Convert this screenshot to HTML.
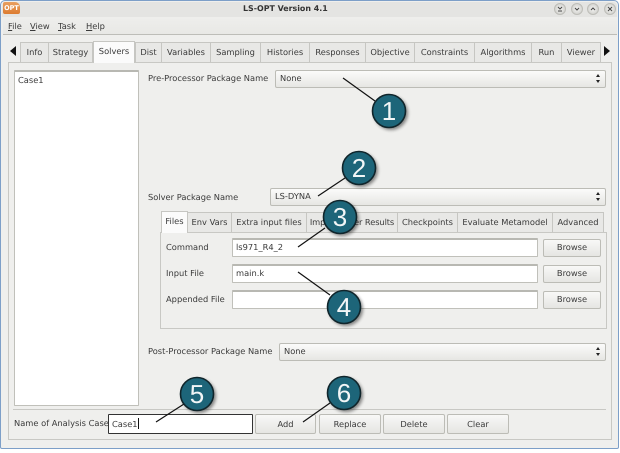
<!DOCTYPE html>
<html><head><meta charset="utf-8">
<style>
html,body{margin:0;padding:0;width:620px;height:453px;overflow:hidden;background:#fff}
*{box-sizing:border-box}
#r{position:absolute;left:0;top:0;width:620px;height:453px;font:8.3px/1 "DejaVu Sans",sans-serif;color:#3a3a3a;text-rendering:geometricPrecision;filter:blur(.3px)}
.a{position:absolute;white-space:nowrap}
.t{position:absolute;top:42px;height:20px;background:#e8e8e6;border:1px solid #c6c6c2;border-bottom:0;text-align:center;line-height:19px;white-space:nowrap;overflow:hidden}
.ta{background:#fbfbfb;top:41px;height:22px;line-height:19px}
.t2{top:212px}
.t2.ta{top:211px}
.c{position:absolute;height:18px;border:1px solid #bcbcb6;border-radius:2px;background:linear-gradient(#fbfbfa,#e6e6e3);line-height:15px;padding-left:4px}
.c i{position:absolute;right:5px;top:3px;width:0;height:0;border-left:2.5px solid transparent;border-right:2.5px solid transparent;border-bottom:3.5px solid #222}
.c b{position:absolute;right:5px;top:9px;width:0;height:0;border-left:2.5px solid transparent;border-right:2.5px solid transparent;border-top:3.5px solid #222}
.in{position:absolute;background:#fff;border:1px solid #c0c0ba;border-top:2px solid #b8b8b2;border-radius:1px;line-height:15px;padding-left:3px}
.b{position:absolute;border:1px solid #bcbcb6;border-radius:2px;background:linear-gradient(#f8f8f7,#e5e5e2);text-align:center;line-height:15px}
.w{position:absolute;top:3px;width:12px;height:12px;border-radius:50%;background:radial-gradient(#f4f4f2,#c8c8c4);border:1px solid #bdbdb8}
u{text-decoration:underline}
</style></head><body>
<div id="r">
<div class="a" style="left:0;top:0;width:619px;height:449px;background:#efefed;border:1.5px solid #7d9fc8;border-radius:5px 5px 2px 2px"></div>
<div class="a" style="left:2px;top:2px;width:615px;height:15px;background:#e4e4e2;border-radius:4px 4px 0 0"></div>
<div class="a" style="left:3px;top:17px;width:614px;height:18px;background:linear-gradient(#eeeeec,#e8e8e5);border-bottom:1px solid #bdbdb8"></div>
<div class="a" style="left:3px;top:2px;width:17px;height:12px;background:linear-gradient(#e8a060,#dc7c30);border-radius:2px 5px 2px 2px;color:#fff;font:bold 6.5px/12px 'DejaVu Sans',sans-serif;text-align:center">OPT</div>
<div class="a" style="left:243px;top:5px;font-weight:bold;font-size:7.9px;color:#333">LS-OPT Version 4.1</div>
<div class="w" style="left:554px"></div><div class="w" style="left:571px"></div><div class="w" style="left:587px"></div><div class="w" style="left:604px"></div>
<svg class="a" style="left:554px;top:3px" width="62" height="12" fill="none" stroke="#444" stroke-width="1"><path d="M4 4l2 2 2-2M4 8h4"/><path d="M21 5l2 2 2-2"/><path d="M37 7l2-2 2 2"/><path d="M54 4l4 4M58 4l-4 4"/></svg>
<div class="a" style="left:8px;top:22px"><u>F</u>ile</div>
<div class="a" style="left:30px;top:22px"><u>V</u>iew</div>
<div class="a" style="left:58px;top:22px"><u>T</u>ask</div>
<div class="a" style="left:86px;top:22px"><u>H</u>elp</div>

<div class="a" style="left:8px;top:62px;width:604px;height:378px;border:1px solid #c8c8c4;background:#efefed"></div>
<div class="a" style="left:10px;top:46px;width:0;height:0;border-top:5px solid transparent;border-bottom:5px solid transparent;border-right:6px solid #111"></div>
<div class="a" style="left:604px;top:46px;width:0;height:0;border-top:5px solid transparent;border-bottom:5px solid transparent;border-left:6px solid #111"></div>

<div class="t" style="left:20px;width:29px">Info</div>
<div class="t" style="left:48px;width:45px">Strategy</div>
<div class="t ta" style="left:93px;width:42px">Solvers</div>
<div class="t" style="left:135px;width:27px">Dist</div>
<div class="t" style="left:161px;width:50px">Variables</div>
<div class="t" style="left:210px;width:51px">Sampling</div>
<div class="t" style="left:260px;width:50px">Histories</div>
<div class="t" style="left:309px;width:57px">Responses</div>
<div class="t" style="left:365px;width:50px">Objective</div>
<div class="t" style="left:414px;width:61px">Constraints</div>
<div class="t" style="left:474px;width:58px">Algorithms</div>
<div class="t" style="left:531px;width:31px">Run</div>
<div class="t" style="left:561px;width:40px">Viewer</div>

<div class="in" style="left:14px;top:70px;width:125px;height:336px;padding-top:1px">Case1</div>

<div class="a" style="left:148px;top:74px">Pre-Processor Package Name</div>
<div class="c" style="left:275px;top:70px;width:331px">None<i></i><b></b></div>
<div class="a" style="left:148px;top:193px">Solver Package Name</div>
<div class="c" style="left:270px;top:188px;width:336px">LS-DYNA<i></i><b></b></div>

<div class="a" style="left:160px;top:232px;width:447px;height:97px;border:1px solid #c8c8c4"></div>
<div class="t t2 ta" style="left:161px;width:27px">Files</div>
<div class="t t2" style="left:187px;width:45px">Env Vars</div>
<div class="t t2" style="left:231px;width:76px">Extra input files</div>
<div class="t t2" style="left:306px;width:92px;letter-spacing:-.1px">Import Other Results</div>
<div class="t t2" style="left:397px;width:61px">Checkpoints</div>
<div class="t t2" style="left:457px;width:96px">Evaluate Metamodel</div>
<div class="t t2" style="left:552px;width:52px">Advanced</div>

<div class="a" style="left:166px;top:243px">Command</div>
<div class="a" style="left:166px;top:269px">Input File</div>
<div class="a" style="left:166px;top:295px">Appended File</div>
<div class="in" style="left:232px;top:238px;width:306px;height:19px">ls971_R4_2</div>
<div class="in" style="left:232px;top:264px;width:306px;height:19px">main.k</div>
<div class="in" style="left:232px;top:290px;width:306px;height:19px"></div>
<div class="b" style="left:543px;top:239px;width:58px;height:18px">Browse</div>
<div class="b" style="left:543px;top:265px;width:58px;height:18px">Browse</div>
<div class="b" style="left:543px;top:291px;width:58px;height:18px">Browse</div>

<div class="a" style="left:148px;top:347px">Post-Processor Package Name</div>
<div class="c" style="left:279px;top:343px;width:327px">None<i></i><b></b></div>

<div class="a" style="left:13px;top:409px;width:593px;height:1px;background:#c8c8c4"></div>
<div class="a" style="left:14px;top:419px">Name of Analysis Case</div>
<div class="in" style="left:108px;top:414px;width:145px;height:20px;border:1px solid #333;line-height:18px;padding-left:3px">Case1<span style="display:inline-block;width:1px;height:11px;background:#111;vertical-align:-2px"></span></div>
<div class="b" style="left:255px;top:414px;width:61px;height:20px;line-height:18px">Add</div>
<div class="b" style="left:319px;top:414px;width:62px;height:20px;line-height:18px">Replace</div>
<div class="b" style="left:383px;top:414px;width:62px;height:20px;line-height:18px">Delete</div>
<div class="b" style="left:447px;top:414px;width:62px;height:20px;line-height:18px">Clear</div>

<svg class="a" style="left:0;top:0" width="620" height="453">
<defs><filter id="s" x="-30%" y="-30%" width="170%" height="170%"><feGaussianBlur stdDeviation="1.5"/></filter></defs>
<g stroke="#111" stroke-width="1.2" fill="none">
<path d="M343 78L375 101M318 196L345 178M298 247L325 228M298 272L330 295M156 422L184 404M303 422L330 403"/>
</g>
<g fill="#000" opacity=".45" filter="url(#s)">
<circle cx="391" cy="113" r="17"/><circle cx="361" cy="170" r="17"/><circle cx="342" cy="219" r="17"/><circle cx="346" cy="309" r="17"/><circle cx="199" cy="396" r="17"/><circle cx="346" cy="395" r="17"/>
</g>
<g fill="#1d6579" stroke="#10252b" stroke-width="1.6">
<circle cx="389" cy="111" r="16.5"/><circle cx="359" cy="168" r="16.5"/><circle cx="340" cy="217" r="16.5"/><circle cx="344" cy="307" r="16.5"/><circle cx="197" cy="394" r="16.5"/><circle cx="344" cy="393" r="16.5"/>
</g>
<g fill="#f2f6f7" font-family="Liberation Sans" font-size="26" text-anchor="middle">
<text x="389" y="120">1</text><text x="359" y="177">2</text><text x="340" y="226">3</text><text x="344" y="316">4</text><text x="197" y="403">5</text><text x="344" y="402">6</text>
</g>
</svg>
</div>
</body></html>
